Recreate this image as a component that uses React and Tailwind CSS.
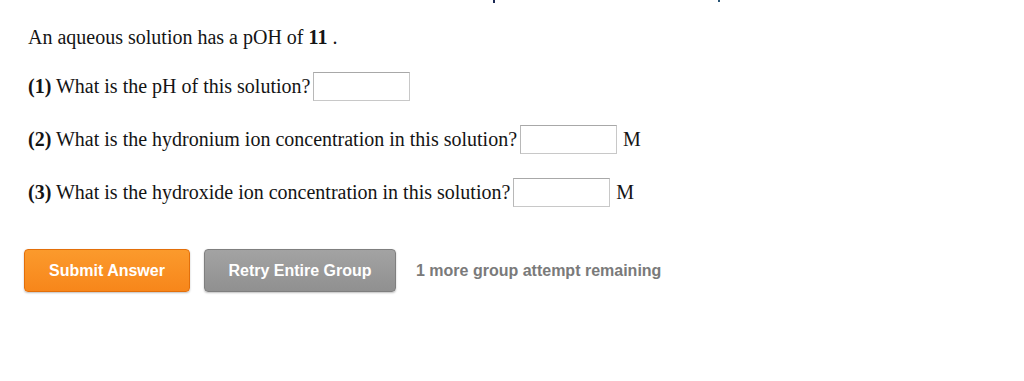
const Input = () => (
  <span className="ml-[3px] w-[97px] h-[29px] border border-[#c8c8c8] border-t-[#a8a8a8] border-l-[#b8b8b8] bg-white" />
);

const Row = ({ num, text, unit, className }) => (
  <div className={`flex items-center h-[30px] ${className}`}>
    <span>
      <b>({num})</b> {text}
    </span>
    <Input />
    {unit && <span className="ml-[6px]">{unit}</span>}
  </div>
);

export default function App() {
  return (
    <div className="w-[1024px] h-[381px] bg-white relative font-['Liberation_Serif',serif] text-[20px] text-[#141414]">
      {/* clipped bits of text from the row above */}
      <span className="absolute left-[493px] top-0 w-[2px] h-[3px] bg-[#1c2a55]" />
      <span className="absolute left-[718px] top-0 w-[2px] h-[2px] bg-[#2a5577]" />

      <div className="pt-[24px] pl-[28px]">
        <p className="leading-[26px]">
          An aqueous solution has a pOH of <b>11</b> .
        </p>

        <Row className="mt-[21px]" num="1" text="What is the pH of this solution?" />
        <Row
          className="mt-[23px]"
          num="2"
          text="What is the hydronium ion concentration in this solution?"
          unit="M"
        />
        <Row
          className="mt-[23px]"
          num="3"
          text="What is the hydroxide ion concentration in this solution?"
          unit="M"
        />
      </div>

      <div className="flex items-center pl-[24px] mt-[42px] font-['Liberation_Sans',sans-serif] font-bold text-[16px]">
        <button className="w-[166px] h-[43px] rounded-[4px] border border-[#e36f0a] bg-gradient-to-b from-[#fb9a2c] to-[#f7861a] text-white shadow-[0_1px_2px_rgba(0,0,0,0.25)]">
          Submit Answer
        </button>
        <button className="ml-[14px] w-[192px] h-[43px] rounded-[4px] border border-[#7f7f7f] bg-gradient-to-b from-[#a3a3a3] to-[#909090] text-white shadow-[0_1px_2px_rgba(0,0,0,0.25)]">
          Retry Entire Group
        </button>
        <span className="ml-[20px] text-[#7a7a7a]">1 more group attempt remaining</span>
      </div>
    </div>
  );
}
